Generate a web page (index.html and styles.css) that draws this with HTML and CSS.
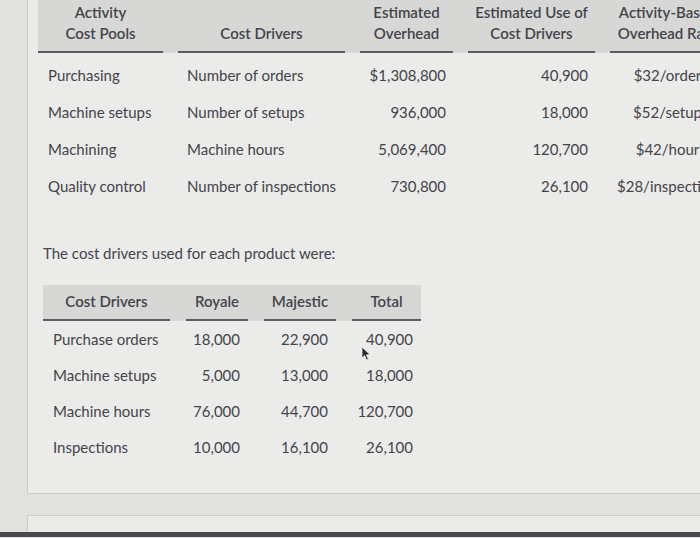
FILE: index.html
```html
<!DOCTYPE html>
<html lang="en">
<head>
    <meta charset="UTF-8">
    <meta name="viewport" content="width=device-width, initial-scale=1.0">
    <title>Activity-based costing</title>
    <link rel="stylesheet" href="styles.css">
</head>
<body>
    <div class="page">
        <div class="card">
            <div class="pools">
                <div class="row head">
                    <div>Activity<br>Cost Pools</div>
                    <div>Cost Drivers</div>
                    <div>Estimated<br>Overhead</div>
                    <div>Estimated Use of<br>Cost Drivers</div>
                    <div>Activity-Based<br>Overhead Rate</div>
                </div>
                <div class="row">
                    <div>Purchasing</div>
                    <div>Number of orders</div>
                    <div class="num">$1,308,800</div>
                    <div class="num">40,900</div>
                    <div class="mid">$32/order</div>
                </div>
                <div class="row">
                    <div>Machine setups</div>
                    <div>Number of setups</div>
                    <div class="num">936,000</div>
                    <div class="num">18,000</div>
                    <div class="mid">$52/setup</div>
                </div>
                <div class="row">
                    <div>Machining</div>
                    <div>Machine hours</div>
                    <div class="num">5,069,400</div>
                    <div class="num">120,700</div>
                    <div class="mid">$42/hour</div>
                </div>
                <div class="row">
                    <div>Quality control</div>
                    <div>Number of inspections</div>
                    <div class="num">730,800</div>
                    <div class="num">26,100</div>
                    <div class="mid">$28/inspection</div>
                </div>
            </div>

            <p class="intro">The cost drivers used for each product were:</p>

            <div class="drivers">
                <div class="row head">
                    <div>Cost Drivers</div>
                    <div>Royale</div>
                    <div>Majestic</div>
                    <div>Total</div>
                </div>
                <div class="row">
                    <div>Purchase orders</div>
                    <div class="num">18,000</div>
                    <div class="num">22,900</div>
                    <div class="num">40,900</div>
                </div>
                <div class="row">
                    <div>Machine setups</div>
                    <div class="num">5,000</div>
                    <div class="num">13,000</div>
                    <div class="num">18,000</div>
                </div>
                <div class="row">
                    <div>Machine hours</div>
                    <div class="num">76,000</div>
                    <div class="num">44,700</div>
                    <div class="num">120,700</div>
                </div>
                <div class="row">
                    <div>Inspections</div>
                    <div class="num">10,000</div>
                    <div class="num">16,100</div>
                    <div class="num">26,100</div>
                </div>
                <svg class="cursor" width="11" height="15" viewBox="0 0 11 15">
                    <path d="M1 1 L1 12 L3.6 9.6 L5.6 14 L7.4 13.2 L5.4 8.9 L9 8.6 Z" fill="#2a2a30" stroke="#e8e8e6" stroke-width="0.8"/>
                </svg>
            </div>
        </div>
        <div class="card next"></div>
    </div>
    <div class="edge"></div>
</body>
</html>
```

FILE: styles.css
```css
* {
    margin: 0;
    padding: 0;
    box-sizing: border-box;
}
body {
    width: 700px;
    height: 538px;
    overflow: hidden;
    background-color: #e1e1df;
    font-family: Lato, "Open Sans", sans-serif;
    font-size: 15px;
    color: #44444c;
}
.page {
    padding-left: 27px;
}
.card {
    height: 494px;
    padding-left: 10px;
    overflow: hidden;
    background-color: #ebebe9;
    border-left: 1px solid #cdcdcb;
    border-bottom: 1px solid #cdcdcb;
}
.card.next {
    height: 17px;
    margin-top: 21px;
    border-top: 1px solid #cdcdcb;
    border-bottom: none;
}
.edge {
    height: 5px;
    background-color: #4a4a4e;
}

/* activity cost pools */
.row {
    display: grid;
    column-gap: 15px;
    align-items: center;
}
.row.head {
    align-items: end;
    text-align: center;
    font-weight: 600;
    line-height: 21px;
    background-color: #d7d7d5;
}
.row.head > div {
    padding-bottom: 7px;
    border-bottom: 2px solid #5c5c62;
}
.pools .row {
    width: 687px;
    grid-template-columns: 125px 167px 93px 127px 115px;
    height: 37px;
}
.pools .row.head {
    height: 53px;
    margin-bottom: 3px;
}
.pools .row > div:first-child {
    padding-left: 10px;
}
.pools .row > div:nth-child(2) {
    padding-left: 9px;
}
.pools .row.head > div {
    padding-left: 0;
}
.num {
    text-align: right;
    padding-right: 7px;
}
.mid {
    text-align: center;
}

.intro {
    margin: 39px 0 0 5px;
    line-height: 20px;
}

/* cost drivers per product */
.drivers {
    position: relative;
    width: 378px;
    margin: 22px 0 0 5px;
}
.drivers .row {
    grid-template-columns: 127px 62px 72px 69px;
    column-gap: 16px;
    height: 36px;
}
.drivers .row > div:first-child {
    padding-left: 10px;
}
.drivers .row.head > div {
    padding: 0 0 7px;
}
.drivers .num {
    padding-right: 8px;
}
.cursor {
    position: absolute;
    top: 61px;
    left: 318px;
}
```
